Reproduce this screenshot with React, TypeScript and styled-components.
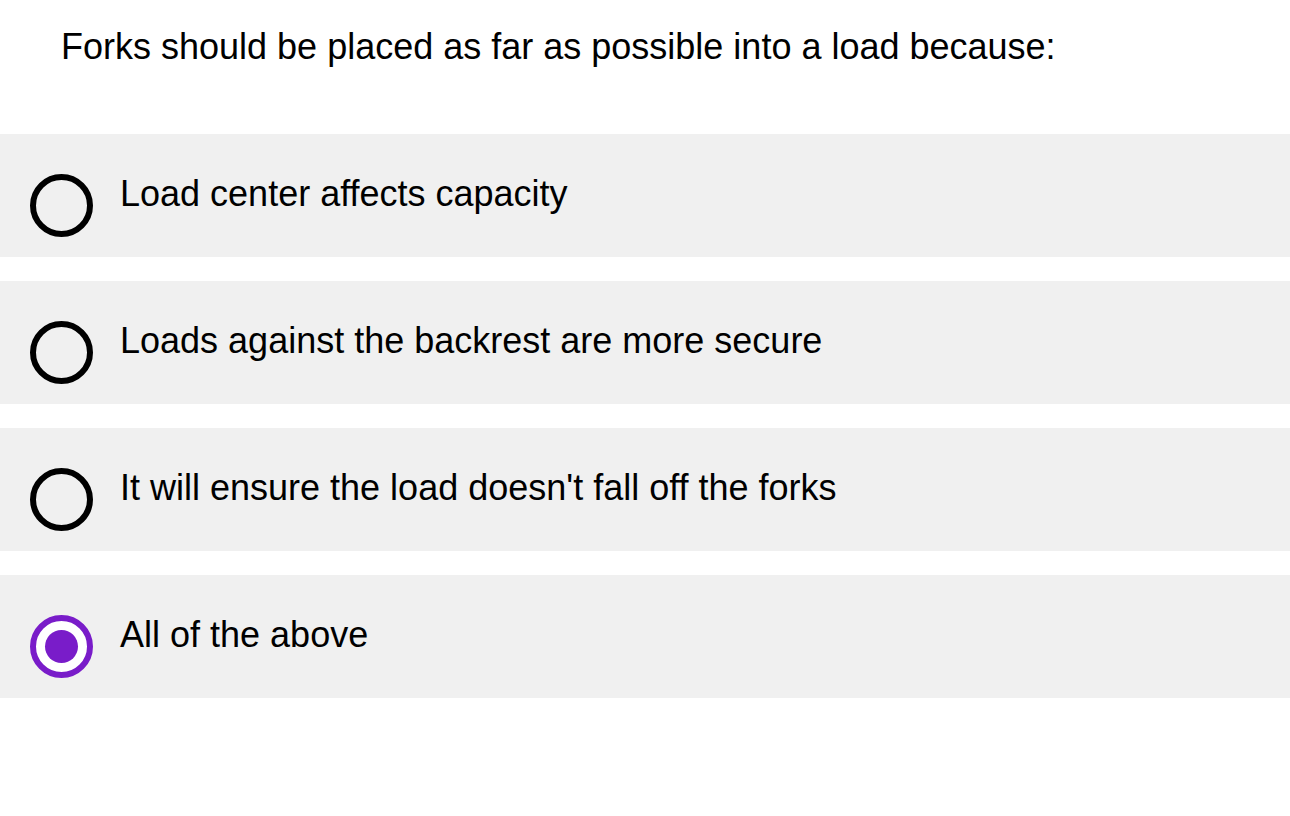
import React, { useState } from "react";
import styled, { createGlobalStyle } from "styled-components";

const GlobalStyle = createGlobalStyle`
  body {
    margin: 0;
    background: #ffffff;
    font-family: "Liberation Sans", Arial, sans-serif;
    color: #000000;
  }
`;

const Wrapper = styled.div`
  width: 100%;
`;

const Question = styled.h1`
  margin: 0;
  padding: 26px 0 0 61px;
  font-size: 36px;
  font-weight: 400;
  line-height: 41px;
`;

const Options = styled.div`
  display: flex;
  flex-direction: column;
  gap: 24px;
  margin-top: 67px;
`;

const Option = styled.label`
  display: flex;
  align-items: flex-start;
  gap: 27px;
  box-sizing: border-box;
  height: 123px;
  padding: 39px 0 0 30px;
  background: #f0f0f0;
  cursor: pointer;
`;

const Radio = styled.span<{ checked: boolean }>`
  position: relative;
  flex: none;
  box-sizing: border-box;
  width: 63px;
  height: 63px;
  margin-top: 1px;
  border-radius: 50%;
  border: 6px solid ${(props) => (props.checked ? "#791cc9" : "#000000")};
  background: ${(props) => (props.checked ? "#ffffff" : "transparent")};

  &::after {
    content: "";
    display: ${(props) => (props.checked ? "block" : "none")};
    position: absolute;
    left: 50%;
    top: 50%;
    width: 33px;
    height: 33px;
    margin: -16.5px 0 0 -16.5px;
    border-radius: 50%;
    background: #791cc9;
  }
`;

const Label = styled.span`
  font-size: 36px;
  line-height: 41px;
`;

const answers = [
  "Load center affects capacity",
  "Loads against the backrest are more secure",
  "It will ensure the load doesn't fall off the forks",
  "All of the above",
];

function App() {
  const [selected, setSelected] = useState(3);

  return (
    <Wrapper>
      <GlobalStyle />
      <Question>Forks should be placed as far as possible into a load because:</Question>
      <Options>
        {answers.map((answer, i) => (
          <Option key={answer} onClick={() => setSelected(i)}>
            <Radio checked={selected === i} />
            <Label>{answer}</Label>
          </Option>
        ))}
      </Options>
    </Wrapper>
  );
}

export default App;
